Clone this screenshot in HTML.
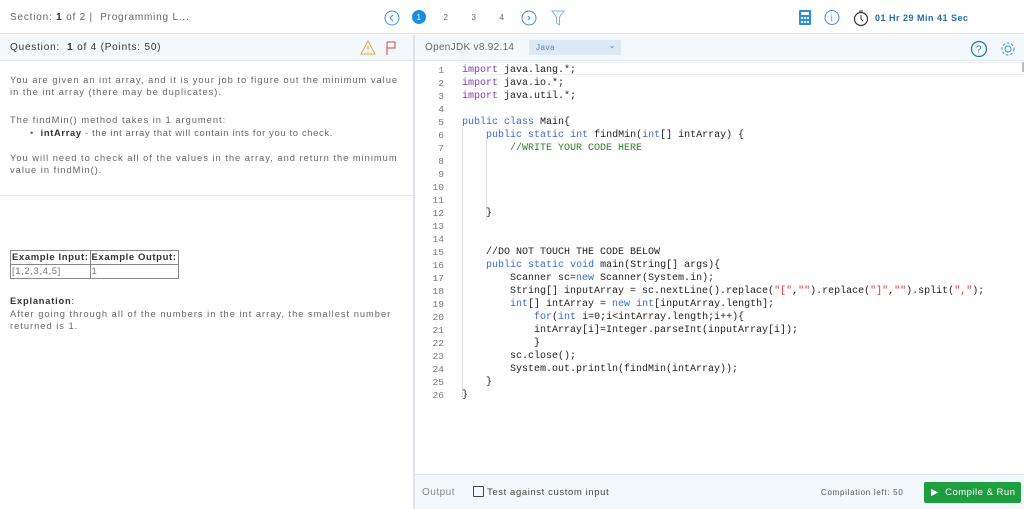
<!DOCTYPE html>
<html><head><style>
*{margin:0;padding:0;box-sizing:border-box}
body{width:1024px;height:509px;overflow:hidden;background:#fff;font-family:"Liberation Sans",sans-serif;color:#555;position:relative;letter-spacing:0.5px}
.a{position:absolute;white-space:nowrap}
.code{font-family:"Liberation Mono",monospace;font-size:10px;color:#222;letter-spacing:0}
.ln{position:absolute;left:420px;width:24px;text-align:right;font-family:"Liberation Mono",monospace;font-size:9.6px;color:#777;letter-spacing:0}
.k{color:#7a3eb5}.b{color:#3b6bd6}.g{color:#2e7d32}.r{color:#d33}
p.t{position:absolute;left:10px;font-size:9.3px;color:#666;line-height:12px;white-space:nowrap;letter-spacing:1px}
</style></head><body>
<div class="a" style="left:0;top:0;width:1024px;height:34px;border-bottom:1px solid #d6e4ee"></div>
<div class="a" style="left:10px;top:12px;font-size:10px;color:#666;letter-spacing:0.8px">Section: <b style="color:#333">1</b> of 2 |&nbsp; Programming L...</div>
<svg class="a" style="left:383px;top:9px" width="200" height="18"><circle cx="9" cy="9" r="7" fill="none" stroke="#3a8fd8"/><path d="M10 6l-3 3 3 3" fill="none" stroke="#3a8fd8"/><circle cx="36" cy="8" r="7" fill="#1a8ee0"/><text x="36" y="11" font-size="8" fill="#fff" text-anchor="middle" font-family="Liberation Sans">1</text><text x="63" y="11" font-size="8" fill="#666" text-anchor="middle" font-family="Liberation Sans">2</text><text x="91" y="11" font-size="8" fill="#666" text-anchor="middle" font-family="Liberation Sans">3</text><text x="119" y="11" font-size="8" fill="#666" text-anchor="middle" font-family="Liberation Sans">4</text><circle cx="146" cy="9" r="7" fill="none" stroke="#3a8fd8"/><path d="M145 7l2 2-2 2" fill="none" stroke="#3a8fd8"/><path d="M169 2h12l-4.5 6v8l-3-2v-6z" fill="none" stroke="#7ab5e6"/></svg>
<svg class="a" style="left:799px;top:9px" width="175" height="18"><rect x="0" y="1" width="12" height="15" rx="1" fill="#2b8fe0"/><rect x="2" y="3" width="8" height="3" fill="#fff"/><g fill="#fff"><rect x="2" y="8" width="2" height="2"/><rect x="5" y="8" width="2" height="2"/><rect x="8" y="8" width="2" height="2"/><rect x="2" y="12" width="2" height="2"/><rect x="5" y="12" width="2" height="2"/><rect x="8" y="12" width="2" height="2"/></g><circle cx="33" cy="8.5" r="7" fill="none" stroke="#3a8fd8"/><text x="33" y="12" font-size="9" fill="#3a8fd8" text-anchor="middle" font-family="Liberation Serif">i</text><circle cx="62" cy="10" r="6.5" fill="none" stroke="#333" stroke-width="1.2"/><path d="M62 6v4l2 2M60 2h4" fill="none" stroke="#333"/></svg>
<div class="a" style="left:875px;top:13px;font-size:9px;font-weight:bold;color:#2b6ea8;letter-spacing:0.5px">01 Hr 29 Min 41 Sec</div>
<div class="a" style="left:0;top:35px;width:1024px;height:26px;background:#f2f8fc;border-bottom:1px solid #e0e8ee"></div>
<div class="a" style="left:413px;top:35px;width:2px;height:474px;background:#dde3e8"></div>
<div class="a" style="left:10px;top:42px;font-size:10px;color:#333;letter-spacing:0.8px">Question:&nbsp; <b>1</b> of 4 (Points: 50)</div>
<svg class="a" style="left:360px;top:39px" width="40" height="18"><path d="M8 2L15 15H1z" fill="none" stroke="#e8a33a"/><path d="M8 7v4M8 12.5v1" stroke="#e8a33a"/><path d="M27 3v13M27 3h8v6h-8" fill="none" stroke="#d44"/></svg>
<div class="a" style="left:425px;top:42px;font-size:10px;color:#666;letter-spacing:0.3px">OpenJDK v8.92.14</div>
<div class="a" style="left:529px;top:40px;width:92px;height:15px;background:#dbe9f6;font-size:8px;color:#5a7fa8;padding:3px 0 0 7px">Java<span style="position:absolute;right:5px;top:1px;color:#5a7fa8">&#8964;</span></div>
<svg class="a" style="left:969px;top:39px" width="50" height="20"><circle cx="10" cy="10" r="7.5" fill="none" stroke="#2b6ea8" stroke-width="1.2"/><text x="10" y="13.5" font-size="10" fill="#2b6ea8" text-anchor="middle" font-family="Liberation Sans">?</text><circle cx="39" cy="10" r="3" fill="none" stroke="#3a8fd8"/><circle cx="39" cy="10" r="6" fill="none" stroke="#3a8fd8" stroke-dasharray="2.5 2"/></svg>
<p class="t" style="top:74px">You are given an int array, and it is your job to figure out the minimum value<br>in the int array (there may be duplicates).</p>
<p class="t" style="top:114px">The findMin() method takes in 1 argument:</p>
<p class="t" style="top:127px;left:30px;letter-spacing:0.7px">&bull;&nbsp; <b style="color:#333">intArray</b> - the int array that will contain ints for you to check.</p>
<p class="t" style="top:152px">You will need to check all of the values in the array, and return the minimum<br>value in findMin().</p>
<div class="a" style="left:0;top:195px;width:413px;border-top:1px solid #e6e6e6"></div>
<table class="a" style="left:10px;top:250px;border-collapse:collapse;font-size:9.5px;letter-spacing:0.6px">
<tr><td style="border:1px solid #888;padding:1px 1px;font-weight:bold;color:#333">Example Input:</td><td style="border:1px solid #888;padding:1px 1px;font-weight:bold;color:#333">Example Output:</td></tr>
<tr><td style="border:1px solid #888;padding:1px 1px;color:#777">[1,2,3,4,5]</td><td style="border:1px solid #888;padding:1px 1px;color:#777">1</td></tr></table>
<p class="t" style="top:295px;color:#333;font-weight:bold;letter-spacing:0.8px">Explanation<span style="font-weight:normal">:</span></p>
<p class="t" style="top:308px">After going through all of the numbers in the int array, the smallest number<br>returned is 1.</p>
<div class="a" style="left:462px;top:62px;width:562px;height:13px;border-top:1px solid #eee;border-bottom:1px solid #eee"></div>
<div class="a" style="left:486px;top:140px;width:1px;height:80px;background:#ddd"></div>
<div class="a" style="left:462px;top:127px;width:1px;height:270px;background:#ddd"></div>
<div class="a" style="left:1022px;top:62px;width:2px;height:10px;background:#bbb"></div>
<div id="code"></div>
<div class="a" style="left:415px;top:474px;width:609px;height:35px;background:#f2f8fc;border-top:1px solid #dde3e8"></div>
<div class="a" style="left:422px;top:487px;font-size:10px;color:#888">Output</div>
<div class="a" style="left:473px;top:486px;width:11px;height:11px;border:1.3px solid #444;border-radius:1px"></div>
<div class="a" style="left:487px;top:487px;font-size:9.5px;color:#444;letter-spacing:0.6px">Test against custom input</div>
<div class="a" style="left:821px;top:488px;font-size:8px;color:#555;letter-spacing:0.7px">Compilation left: 50</div>
<div class="a" style="left:924px;top:482px;width:97px;height:21px;background:#1e9e3e;border-radius:2px;color:#fff;font-size:9.5px;padding:5px 0 0 7px">&#9654;&nbsp; Compile &amp; Run</div>
<script>
var L=['<span class="k">import</span> java.lang.*;','<span class="k">import</span> java.io.*;','<span class="k">import</span> java.util.*;','','<span class="b">public</span> <span class="b">class</span> Main{','    <span class="b">public</span> <span class="b">static</span> <span class="b">int</span> findMin(<span class="b">int</span>[] intArray) {','        <span class="g">//WRITE YOUR CODE HERE</span>','','','','','    }','','','    //DO NOT TOUCH THE CODE BELOW','    <span class="b">public</span> <span class="b">static</span> <span class="b">void</span> main(String[] args){','        Scanner sc=<span class="b">new</span> Scanner(System.in);','        String[] inputArray = sc.nextLine().replace(<span class="r">"["</span>,<span class="r">""</span>).replace(<span class="r">"]"</span>,<span class="r">""</span>).split(<span class="r">","</span>);','        <span class="b">int</span>[] intArray = <span class="b">new</span> <span class="b">int</span>[inputArray.length];','            <span class="b">for</span>(<span class="b">int</span> i=0;i&lt;intArray.length;i++){','            intArray[i]=Integer.parseInt(inputArray[i]);','            }','        sc.close();','        System.out.println(findMin(intArray));','    }','}'];
var h='';for(var i=0;i<L.length;i++){var y=65+i*13;h+='<div class="ln" style="top:'+y+'px">'+(i+1)+'</div><div class="a code" style="left:462px;top:'+y+'px">'+L[i].replace(/^ +/,function(s){return s.replace(/ /g,'&nbsp;')})+'</div>';}
document.getElementById('code').innerHTML=h;
</script>
</body></html>
